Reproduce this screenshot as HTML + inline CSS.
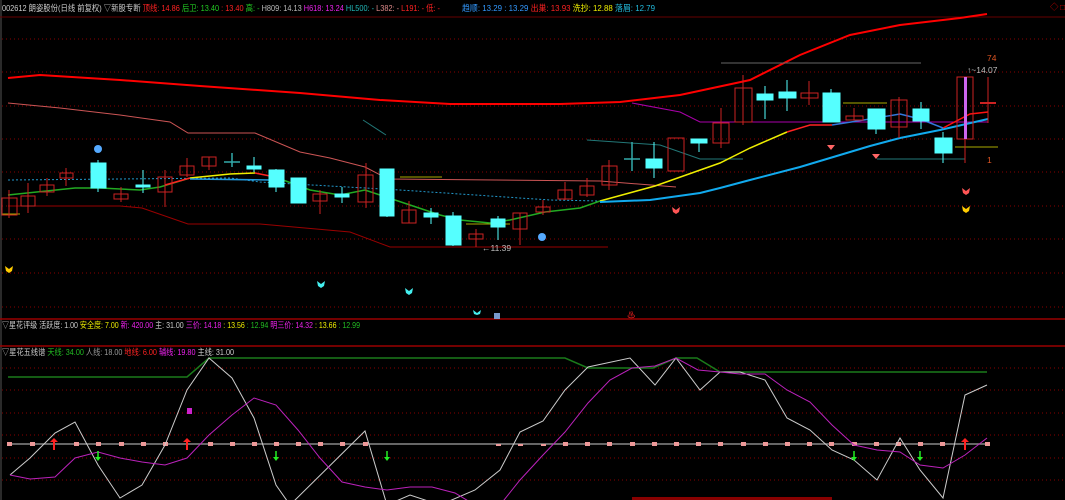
<!DOCTYPE html>
<html><head><meta charset="utf-8"><style>
html,body{margin:0;padding:0;background:#000;width:1065px;height:500px;overflow:hidden}
svg{display:block}
text{font-family:"Liberation Sans","Noto Sans CJK SC",sans-serif;font-size:8.5px}
</style></head><body>
<svg width="1065" height="500" viewBox="0 0 1065 500" xmlns="http://www.w3.org/2000/svg">
<rect width="1065" height="500" fill="#000"/>
<line x1="1" y1="0" x2="1" y2="500" stroke="#555" stroke-width="1"/>
<line x1="0" y1="17" x2="1065" y2="17" stroke="#600" stroke-width="1"/>
<g stroke="#8a0000" stroke-width="1" stroke-dasharray="1,3">
<line x1="2" y1="39" x2="1065" y2="39"/><line x1="2" y1="72" x2="1065" y2="72"/>
<line x1="2" y1="106" x2="1065" y2="106"/><line x1="2" y1="139" x2="1065" y2="139"/>
<line x1="2" y1="172" x2="1065" y2="172"/><line x1="2" y1="206" x2="1065" y2="206"/>
<line x1="2" y1="239" x2="1065" y2="239"/><line x1="2" y1="273" x2="1065" y2="273"/>
<line x1="2" y1="307" x2="1065" y2="307"/>
<line x1="2" y1="368" x2="1065" y2="368"/><line x1="2" y1="390" x2="1065" y2="390"/>
<line x1="2" y1="413" x2="1065" y2="413"/><line x1="2" y1="435" x2="1065" y2="435"/>
<line x1="2" y1="458" x2="1065" y2="458"/><line x1="2" y1="480" x2="1065" y2="480"/>
</g>
<line x1="0" y1="319" x2="1065" y2="319" stroke="#900" stroke-width="1.5"/>
<line x1="0" y1="346" x2="1065" y2="346" stroke="#900" stroke-width="1.5"/>
<!-- header -->
<text x="2" y="11" fill="#ccc" textLength="438" lengthAdjust="spacingAndGlyphs">002612 朗姿股份(日线 前复权) ▽新股专断 <tspan fill="#f22">顶线: 14.86</tspan> <tspan fill="#2c2">后卫: 13.40</tspan><tspan fill="#f22"> : 13.40</tspan> <tspan fill="#2c2">高: -</tspan> <tspan fill="#bbb">H809: 14.13</tspan> <tspan fill="#e2e">H618: 13.24</tspan> <tspan fill="#2bb">HL500: -</tspan> <tspan fill="#d88">L382: -</tspan> <tspan fill="#f22">L191: -</tspan> <tspan fill="#f22">低: -</tspan></text>
<text x="462" y="11" fill="#39f" textLength="193" lengthAdjust="spacingAndGlyphs">趋顺: 13.29 : 13.29 <tspan fill="#f22">出巢: 13.93</tspan> <tspan fill="#ee0">洗抄: 12.88</tspan> <tspan fill="#2bd">落眉: 12.79</tspan></text>
<text x="1050" y="10" fill="#c00">◇</text><text x="1060" y="10" fill="#c00">□</text>
<!-- bands -->
<polyline fill="none" stroke="#f00" stroke-width="2" points="8,78 40,75 120,80 200,86 300,93 380,100 450,104 560,104 620,102 680,95 750,80 800,55 850,35 900,25 960,18 987,14"/>
<polyline fill="none" stroke="#c55" stroke-width="1" points="8,103 60,108 120,115 170,122 188,133 255,133 300,152 330,158 365,167 388,179 600,181 676,187"/>
<polyline fill="none" stroke="#900" stroke-width="1" points="8,206 120,206 142,208 188,224 260,224 350,232 390,247 608,247"/>
<polyline fill="none" stroke="#a0a" stroke-width="1" points="632,103 680,112 700,122 988,122"/>
<line x1="721" y1="63" x2="921" y2="63" stroke="#666"/>
<polyline fill="none" stroke="#277" stroke-width="1" points="587,140 660,145 700,159 743,159"/>
<line x1="363" y1="120" x2="386" y2="135" stroke="#277"/>
<line x1="877" y1="159" x2="965" y2="159" stroke="#277"/>
<g stroke="#aa0" stroke-width="1"><line x1="843" y1="103" x2="887" y2="103"/><line x1="955" y1="147" x2="998" y2="147"/><line x1="400" y1="177" x2="442" y2="177"/><line x1="2" y1="214" x2="20" y2="214"/><line x1="466" y1="224" x2="510" y2="224"/></g>
<!-- MAs -->
<polyline fill="none" stroke="#29c" stroke-width="1" stroke-dasharray="2,2" points="8,180 230,178 260,182 400,190 550,200 600,201"/>
<polyline fill="none" stroke="#2a2" stroke-width="1.5" points="8,195 75,188 100,188 140,190 160,187 190,178"/>
<polyline fill="none" stroke="#f22" stroke-width="1.5" points="165,185 190,178"/>
<polyline fill="none" stroke="#ee0" stroke-width="1.5" points="190,178 230,174 255,173"/>
<polyline fill="none" stroke="#f22" stroke-width="1.5" points="255,173 275,177"/>
<polyline fill="none" stroke="#2a2" stroke-width="1.5" points="275,177 310,190 340,195 365,190 380,195 410,205 440,215 460,220 490,223 510,220 545,212 580,208 600,201"/>
<polyline fill="none" stroke="#ee0" stroke-width="1.5" points="600,201 655,186 720,163 750,148 787,132"/>
<polyline fill="none" stroke="#f22" stroke-width="1.5" points="787,132 810,125 832,125"/>
<polyline fill="none" stroke="#29d" stroke-width="1.5" points="190,179 270,180"/>
<polyline fill="none" stroke="#1ae" stroke-width="2" points="600,202 650,200 700,193 720,188 750,180 800,167 830,158 870,146 900,138 940,130 988,119"/>
<polyline fill="none" stroke="#37d" stroke-width="1.5" points="832,125 870,119 900,114 920,119 943,128"/>
<polyline fill="none" stroke="#f11" stroke-width="1.5" points="943,128 970,114 988,112"/>
<!-- candles -->
<g stroke="#c22" fill="none" stroke-width="1">
<line x1="9" y1="190" x2="9" y2="218"/><rect x="2" y="198" width="15" height="17"/>
<line x1="28" y1="183" x2="28" y2="213"/><rect x="21" y="196" width="14" height="10"/>
<line x1="47" y1="178" x2="47" y2="196"/><rect x="40" y="185" width="14" height="7"/>
<line x1="66" y1="168" x2="66" y2="186"/><rect x="60" y="173" width="13" height="5"/>
<line x1="121" y1="187" x2="121" y2="202"/><rect x="114" y="194" width="14" height="5"/>
<line x1="165" y1="170" x2="165" y2="207"/><rect x="158" y="177" width="14" height="15"/>
<line x1="187" y1="158" x2="187" y2="177"/><rect x="180" y="166" width="14" height="9"/>
<line x1="209" y1="157" x2="209" y2="170"/><rect x="202" y="157" width="14" height="9"/>
<line x1="320" y1="190" x2="320" y2="214"/><rect x="313" y="194" width="14" height="7"/>
<line x1="366" y1="163" x2="366" y2="208"/><rect x="358" y="175" width="15" height="27"/>
<line x1="409" y1="201" x2="409" y2="223"/><rect x="402" y="210" width="14" height="13"/>
<line x1="476" y1="229" x2="476" y2="247"/><rect x="469" y="234" width="14" height="5"/>
<line x1="520" y1="213" x2="520" y2="245"/><rect x="513" y="213" width="14" height="16"/>
<line x1="543" y1="200" x2="543" y2="215"/><rect x="536" y="207" width="14" height="5"/>
<line x1="565" y1="182" x2="565" y2="200"/><rect x="558" y="190" width="14" height="9"/>
<line x1="587" y1="178" x2="587" y2="197"/><rect x="580" y="186" width="14" height="9"/>
<line x1="609" y1="160" x2="609" y2="190"/><rect x="602" y="166" width="15" height="19"/>
<rect x="668" y="138" width="16" height="33"/>
<line x1="721" y1="108" x2="721" y2="148"/><rect x="713" y="123" width="16" height="20"/>
<line x1="743" y1="75" x2="743" y2="125"/><rect x="735" y="88" width="17" height="34"/>
<line x1="809" y1="81" x2="809" y2="105"/><rect x="801" y="93" width="17" height="5"/>
<line x1="854" y1="108" x2="854" y2="120"/><rect x="846" y="116" width="17" height="4"/>
<line x1="899" y1="97" x2="899" y2="138"/><rect x="891" y="100" width="16" height="27"/>
<line x1="965" y1="130" x2="965" y2="163"/><rect x="957" y="77" width="16" height="62"/>
<line x1="988" y1="77" x2="988" y2="123"/><line x1="980" y1="103" x2="996" y2="103" stroke-width="2"/>
</g>
<rect x="964" y="77" width="3" height="62" fill="#c6e"/>
<g fill="#5ff" stroke="#5ff" stroke-width="1">
<line x1="98" y1="160" x2="98" y2="192"/><rect x="91" y="163" width="15" height="25"/>
<line x1="143" y1="170" x2="143" y2="193"/><rect x="136" y="185" width="14" height="2"/>
<line x1="254" y1="157" x2="254" y2="172"/><rect x="247" y="166" width="14" height="3"/>
<line x1="276" y1="169" x2="276" y2="192"/><rect x="269" y="170" width="15" height="17"/>
<line x1="298" y1="178" x2="298" y2="203"/><rect x="291" y="178" width="15" height="25"/>
<line x1="342" y1="187" x2="342" y2="203"/><rect x="335" y="194" width="14" height="3"/>
<line x1="387" y1="169" x2="387" y2="217"/><rect x="380" y="169" width="14" height="47"/>
<line x1="431" y1="208" x2="431" y2="224"/><rect x="424" y="213" width="14" height="4"/>
<line x1="453" y1="212" x2="453" y2="246"/><rect x="446" y="216" width="15" height="29"/>
<line x1="498" y1="216" x2="498" y2="240"/><rect x="491" y="219" width="14" height="8"/>
<line x1="654" y1="142" x2="654" y2="178"/><rect x="646" y="159" width="16" height="9"/>
<line x1="699" y1="139" x2="699" y2="152"/><rect x="691" y="139" width="16" height="4"/>
<line x1="765" y1="86" x2="765" y2="119"/><rect x="757" y="94" width="16" height="6"/>
<line x1="787" y1="80" x2="787" y2="111"/><rect x="779" y="92" width="17" height="6"/>
<line x1="831" y1="89" x2="831" y2="122"/><rect x="823" y="93" width="17" height="29"/>
<line x1="876" y1="109" x2="876" y2="134"/><rect x="868" y="109" width="17" height="20"/>
<line x1="921" y1="102" x2="921" y2="129"/><rect x="913" y="109" width="16" height="12"/>
<line x1="943" y1="132" x2="943" y2="163"/><rect x="935" y="138" width="17" height="15"/>
</g>
<g stroke="#3aa" stroke-width="1.5"><line x1="232" y1="153" x2="232" y2="167"/><line x1="224" y1="162" x2="240" y2="162"/><line x1="632" y1="142" x2="632" y2="171"/><line x1="624" y1="159" x2="640" y2="159"/></g>
<text x="482" y="251" fill="#bbb" font-size="8">←11.39</text>
<text x="967" y="73" fill="#bbb" font-size="8">↑~14.07</text>
<text x="987" y="61" fill="#d52" font-size="8">74</text>
<text x="987" y="163" fill="#d52" font-size="8">1</text>
<circle cx="98" cy="149" r="4" fill="#5af"/><circle cx="542" cy="237" r="4" fill="#5af"/>
<g fill="#4ee"><path d="M317,281 l4,3 l4,-3 l-1,5 l-3,2 l-3,-2z"/><path d="M405,288 l4,3 l4,-3 l-1,5 l-3,2 l-3,-2z"/><path d="M473,310 l4,3 l4,-3 l-1,4 l-3,1 l-3,-1z"/></g>
<path d="M5,266 l4,3 l4,-3 l-1,5 l-3,2 l-3,-2z" fill="#fc0"/>
<path d="M672,207 l4,3 l4,-3 l-1,5 l-3,2 l-3,-2z" fill="#f55"/>
<path d="M962,188 l4,3 l4,-3 l-1,5 l-3,2 l-3,-2z" fill="#f55"/>
<path d="M962,206 l4,3 l4,-3 l-1,5 l-3,2 l-3,-2z" fill="#fc0"/>
<path d="M827,145 h8 l-4,5z" fill="#f66"/><path d="M872,154 h8 l-4,5z" fill="#f66"/>
<rect x="494" y="313" width="6" height="6" fill="#79c"/>
<text x="627" y="318" fill="#f22" font-size="8">♨</text>
<!-- panel 2 -->
<text x="2" y="328" fill="#ccc" textLength="358" lengthAdjust="spacingAndGlyphs">▽星花评级 活跃度: 1.00 <tspan fill="#ee0">安全度: 7.00</tspan> <tspan fill="#e2e">新: 420.00</tspan> <tspan fill="#ccc">主: 31.00</tspan> <tspan fill="#e2e">三价: 14.18</tspan><tspan fill="#ee0"> : 13.56</tspan><tspan fill="#2b2"> : 12.94</tspan> <tspan fill="#e2e">明三价: 14.32</tspan><tspan fill="#ee0"> : 13.66</tspan><tspan fill="#2b2"> : 12.99</tspan></text>
<!-- panel 3 -->
<text x="2" y="355" fill="#ccc" textLength="232" lengthAdjust="spacingAndGlyphs">▽星花五线谱 <tspan fill="#2b2">天线: 34.00</tspan>  <tspan fill="#999">人线: 18.00</tspan> <tspan fill="#f22">地线: 6.00</tspan> <tspan fill="#e2e">辅线: 19.80</tspan> <tspan fill="#ccc">主线: 31.00</tspan></text>
<line x1="8" y1="444" x2="990" y2="444" stroke="#888" stroke-width="1.5"/>
<g fill="#e99">
<rect x="7" y="442" width="5" height="4"/><rect x="30" y="442" width="5" height="4"/><rect x="74" y="442" width="5" height="4"/><rect x="96" y="442" width="5" height="4"/><rect x="119" y="442" width="5" height="4"/><rect x="141" y="442" width="5" height="4"/><rect x="163" y="442" width="5" height="4"/><rect x="208" y="442" width="5" height="4"/><rect x="230" y="442" width="5" height="4"/><rect x="252" y="442" width="5" height="4"/><rect x="274" y="442" width="5" height="4"/><rect x="296" y="442" width="5" height="4"/><rect x="318" y="442" width="5" height="4"/><rect x="340" y="442" width="5" height="4"/><rect x="363" y="442" width="5" height="4"/>
<rect x="496" y="444" width="5" height="2"/><rect x="518" y="444" width="5" height="2"/><rect x="541" y="444" width="5" height="2"/><rect x="563" y="442" width="5" height="4"/><rect x="585" y="442" width="5" height="4"/><rect x="607" y="442" width="5" height="4"/><rect x="630" y="442" width="5" height="4"/><rect x="652" y="442" width="5" height="4"/><rect x="674" y="442" width="5" height="4"/><rect x="696" y="442" width="5" height="4"/><rect x="718" y="442" width="5" height="4"/><rect x="741" y="442" width="5" height="4"/><rect x="763" y="442" width="5" height="4"/><rect x="785" y="442" width="5" height="4"/><rect x="807" y="442" width="5" height="4"/><rect x="829" y="442" width="5" height="4"/><rect x="852" y="442" width="5" height="4"/><rect x="874" y="442" width="5" height="4"/><rect x="896" y="442" width="5" height="4"/><rect x="918" y="442" width="5" height="4"/><rect x="940" y="442" width="5" height="4"/><rect x="985" y="442" width="5" height="4"/>
</g>
<polyline fill="none" stroke="#1a7a1a" stroke-width="1.5" points="8,377 187,377 209,358 565,358 588,368 653,368 676,358 697,358 720,372 987,372"/>
<polyline fill="none" stroke="#ccc" stroke-width="1" points="10,475 30,458 55,433 75,422 98,465 120,498 142,485 165,445 187,390 209,358 232,378 254,418 276,485 290,505 365,431 387,505 410,495 440,505 475,490 500,470 520,432 543,421 565,390 588,367 630,358 655,385 676,358 700,390 720,372 740,372 765,380 787,418 810,430 832,450 854,460 877,480 900,438 920,470 943,498 965,395 987,385"/>
<polyline fill="none" stroke="#b2b" stroke-width="1" points="10,475 30,479 55,477 75,458 98,452 120,458 142,462 165,465 187,458 209,435 232,415 254,398 276,405 298,430 320,458 342,482 365,487 387,490 410,487 432,487 455,493 475,505 500,505 520,480 543,455 565,432 588,403 610,380 632,368 655,366 676,358 698,370 720,372 740,374 765,374 787,390 810,402 832,425 854,445 877,450 900,452 920,465 943,468 965,455 987,438"/>
<g stroke="#f22" stroke-width="2"><line x1="54" y1="439" x2="54" y2="450"/><line x1="187" y1="439" x2="187" y2="450"/><line x1="965" y1="439" x2="965" y2="450"/></g>
<g fill="#f22"><path d="M50,442 l4,-4 l4,4z"/><path d="M183,442 l4,-4 l4,4z"/><path d="M961,442 l4,-4 l4,4z"/></g>
<g stroke="#2e2" stroke-width="1.5"><line x1="98" y1="451" x2="98" y2="459"/><line x1="276" y1="451" x2="276" y2="459"/><line x1="387" y1="451" x2="387" y2="459"/><line x1="854" y1="451" x2="854" y2="459"/><line x1="920" y1="451" x2="920" y2="459"/></g>
<g fill="#2e2"><path d="M95,457 l3,4 l3,-4z"/><path d="M273,457 l3,4 l3,-4z"/><path d="M384,457 l3,4 l3,-4z"/><path d="M851,457 l3,4 l3,-4z"/><path d="M917,457 l3,4 l3,-4z"/></g>
<rect x="187" y="408" width="5" height="6" fill="#c2c"/>
<rect x="632" y="497" width="200" height="3" fill="#800"/>
</svg>
</body></html>
